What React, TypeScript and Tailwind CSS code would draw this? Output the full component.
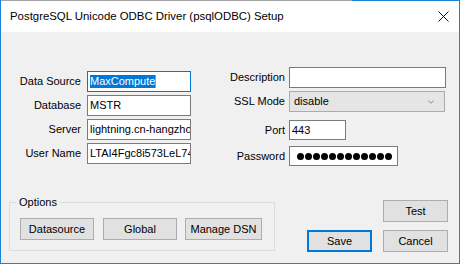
import { ChevronDown } from "lucide-react";

const ui = "font-['Liberation_Sans',Arial,sans-serif]";

function Label({ children }: { children: string }) {
  return (
    <div className="flex h-full items-center justify-end text-[11px] leading-none text-black">
      {children}
    </div>
  );
}

function TextBox({
  value,
  width,
  height = "h-[21px]",
}: {
  value: string;
  width: string;
  height?: string;
}) {
  return (
    <div
      className={`${width} ${height} flex items-center overflow-hidden whitespace-nowrap border border-[#7a7a7a] bg-white pl-[2px] text-[11px] leading-none text-black`}
    >
      {value}
    </div>
  );
}

function Button({
  label,
  width,
  primary = false,
}: {
  label: string;
  width: string;
  primary?: boolean;
}) {
  return (
    <button
      type="button"
      className={
        primary
          ? `${width} flex h-[22px] items-center justify-center border-2 border-[#0078d7] bg-[#e1e1e1] text-[11px] leading-none text-black`
          : `${width} flex h-[22px] items-center justify-center border border-[#adadad] bg-[#e1e1e1] text-[11px] leading-none text-black`
      }
    >
      {label}
    </button>
  );
}

export default function App() {
  return (
    <div className={`${ui} h-[265px] w-[460px] bg-white`}>
      <div className="flex h-[264px] w-[460px] flex-col border-x border-b border-[#1883d7]">
        {/* top edge: partly covered by another window */}
        <div className="flex h-px shrink-0">
          <div className="h-px w-[351px] bg-[#a3a3a3]" />
          <div className="h-px flex-1 bg-[#1883d7]" />
        </div>

        <header className="flex h-[31px] shrink-0 items-center justify-between bg-white pl-[9px] pr-[9px]">
          <span className="text-[11.4px] leading-none text-black">
            PostgreSQL Unicode ODBC Driver (psqlODBC) Setup
          </span>
          <svg width="11" height="11" viewBox="0 0 11 11" className="mr-px">
            <path d="M0.5 0.5 L10.5 10.5 M10.5 0.5 L0.5 10.5" stroke="#111" strokeWidth="1" />
          </svg>
        </header>

        <main className="flex flex-1 flex-col bg-[#f0f0f0]">
          <section className="flex">
            <div className="mt-[39px] grid grid-cols-[80px_104px] auto-rows-[21px] gap-x-[6px] gap-y-[3px]">
              <Label>Data Source</Label>
              <div className="flex h-[21px] w-[104px] items-center overflow-hidden border border-[#0078d7] bg-white pl-[2px] text-[11px] leading-none">
                <span className="bg-[#0078d7] py-px text-white">MaxCompute</span>
                <span className="h-[13px] w-px bg-[#f08a24]" />
              </div>
              <Label>Database</Label>
              <TextBox value="MSTR" width="w-[104px]" />
              <Label>Server</Label>
              <TextBox value="lightning.cn-hangzhou.maxcompute.aliyun.com" width="w-[104px]" />
              <Label>User Name</Label>
              <TextBox value="LTAI4Fgc8i573LeL74xyz" width="w-[104px]" />
            </div>

            <div className="ml-[4px] mt-[35px] grid grid-cols-[90px_157px] gap-x-[4px]">
              <div className="h-[21px]">
                <Label>Description</Label>
              </div>
              <TextBox value="" width="w-[157px]" />

              <div className="mt-[3px] h-[21px]">
                <Label>SSL Mode</Label>
              </div>
              <div className="mt-[3px] flex h-[21px] w-[156px] items-center justify-between border border-[#acacac] bg-[#e5e5e5] pl-[4px] pr-[8px] text-[11px] leading-none text-black">
                <span>disable</span>
                <ChevronDown size={10} strokeWidth={1.5} className="text-[#555]" />
              </div>

              <div className="mt-[8px] h-[20px]">
                <Label>Port</Label>
              </div>
              <div className="mt-[8px]">
                <TextBox value="443" width="w-[57px]" height="h-[20px]" />
              </div>

              <div className="mt-[6px] h-[20px]">
                <Label>Password</Label>
              </div>
              <div className="mt-[6px] flex h-[20px] w-[109px] items-center gap-px border border-[#7a7a7a] bg-white pl-[7px]">
                {Array.from({ length: 12 }).map((_, i) => (
                  <span key={i} className="h-[7px] w-[7px] rounded-full bg-black" />
                ))}
              </div>
            </div>
          </section>

          <section className="mt-[30px] flex items-start">
            <fieldset className="ml-[8px] w-[266px] border border-[#dcdcdc] pb-[10px]">
              <legend className="ml-[6px] px-[3px] text-[11px] leading-[13px] text-black">
                Options
              </legend>
              <div className="mt-[9px] flex pl-[10px]">
                <Button label="Datasource" width="w-[74px]" />
                <div className="ml-[9px]">
                  <Button label="Global" width="w-[74px]" />
                </div>
                <div className="ml-[8px]">
                  <Button label="Manage DSN" width="w-[77px]" />
                </div>
              </div>
            </fieldset>

            <div className="ml-[32px] mt-[34px]">
              <Button label="Save" width="w-[65px]" primary />
            </div>

            <div className="ml-[11px] mt-[4px] flex flex-col gap-[8px]">
              <Button label="Test" width="w-[65px]" />
              <Button label="Cancel" width="w-[65px]" />
            </div>
          </section>
        </main>
      </div>
    </div>
  );
}
